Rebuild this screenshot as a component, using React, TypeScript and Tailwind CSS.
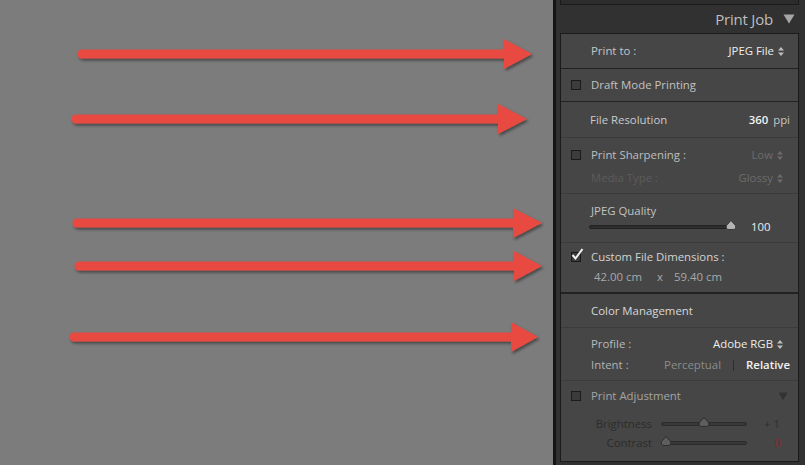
import React from "react";

const font = { fontFamily: '"Open Sans", "Noto Sans", sans-serif' };

const arrows = [
  { x1: 82, x2: 504, tip: 532, y: 54 },
  { x1: 76, x2: 498, tip: 527, y: 119 },
  { x1: 77, x2: 513, tip: 542, y: 223 },
  { x1: 79, x2: 514, tip: 542, y: 266 },
  { x1: 74, x2: 511, tip: 538, y: 337 },
];

const UpDown = ({ color = "#bdbdbd" }: { color?: string }) => (
  <svg width="6" height="9" viewBox="0 0 6 9" className="ml-[4px]">
    <path d="M3 0 L6 3.5 L0 3.5 Z" fill={color} />
    <path d="M0 5.5 L6 5.5 L3 9 Z" fill={color} />
  </svg>
);

const Check = ({ checked = false, dim = false }: { checked?: boolean; dim?: boolean }) => (
  <div className="relative w-[10px] h-[10px]">
    <div
      className={`w-[10px] h-[10px] border ${dim ? "border-[#1c1c1c] bg-[#3a3a3a]" : "border-[#1a1a1a] bg-[#3c3c3c]"}`}
    />
    {checked && (
      <svg width="13" height="13" viewBox="0 0 13 13" className="absolute left-[0px] top-[-4px]">
        <path d="M1.5 7 L4.5 10.5 L11.5 1" fill="none" stroke="#f2f2f2" strokeWidth="2" />
      </svg>
    )}
  </div>
);

const Thumb = ({ left, dim = false }: { left: number; dim?: boolean }) => (
  <svg
    width="12"
    height="10"
    viewBox="0 0 12 10"
    className="absolute top-[-5px]"
    style={{ left: left - 6 }}
  >
    <path
      d="M6 0.5 L10.5 5.5 Q11.5 9.5 8 9.5 L4 9.5 Q0.5 9.5 1.5 5.5 Z"
      fill={dim ? "#5e5e5e" : "#b4b4b4"}
      stroke={dim ? "#2e2e2e" : "#3a3a3a"}
      strokeWidth="1"
    />
  </svg>
);

const Slider = ({ width, pos, dim = false }: { width: number; pos: number; dim?: boolean }) => (
  <div className="relative h-[4px]" style={{ width }}>
    <div
      className={`h-[4px] rounded-full border ${dim ? "border-[#2c2c2c] bg-[#383838]" : "border-[#222] bg-[#2e2e2e]"}`}
    />
    <Thumb left={pos} dim={dim} />
  </div>
);

export default function App() {
  return (
    <div className="flex w-[805px] h-[465px] overflow-hidden" style={font}>
      <div className="w-[553px] h-full bg-[#7c7c7c]">
        <svg width="553" height="465" viewBox="0 0 553 465">
          <defs>
            <filter id="sh" x="-5%" y="-50%" width="110%" height="200%">
              <feDropShadow dx="1.5" dy="2" stdDeviation="1.5" floodColor="#000" floodOpacity="0.45" />
            </filter>
          </defs>
          {arrows.map((a, i) => (
            <g key={i} filter="url(#sh)">
              <line x1={a.x1} y1={a.y} x2={a.x2 + 2} y2={a.y} stroke="#e8493f" strokeWidth="9" strokeLinecap="round" />
              <polygon points={`${a.x2},${a.y - 15} ${a.tip},${a.y} ${a.x2},${a.y + 15}`} fill="#e8493f" />
            </g>
          ))}
        </svg>
      </div>

      <div className="w-[252px] h-full flex bg-[#313131]">
        <div className="w-[3px] h-full bg-[#151515]" />
        <div className="flex-1 flex flex-col pl-[4px] pr-[6px]">
          <div className="h-[5px] border-x border-b border-[#1b1b1b] bg-[#2c2c2c]" />
          <div className="h-[28px] flex items-center justify-end pr-[4px]">
            <span className="text-[15px] text-[#bdbdbd] tracking-[-0.2px]">Print Job</span>
            <svg width="12" height="10" viewBox="0 0 12 10" className="ml-[10px]">
              <path d="M0.5 0.5 L11.5 0.5 L6 9.5 Z" fill="#a6a6a6" />
            </svg>
          </div>

          <div className="flex-1 mb-[3px] border border-[#1b1b1b] bg-[#464646] text-[11.4px] leading-[16px]">
            {/* Print to */}
            <div className="h-[34px] flex items-center pl-[30px] pr-[14px]">
              <span className="text-[#c4c4c4]">Print to :</span>
              <span className="ml-auto text-[#ececec]">JPEG File</span>
              <UpDown />
            </div>

            {/* Draft mode */}
            <div className="h-[33px] border-t border-[#222] flex items-center pl-[10px]">
              <Check />
              <span className="ml-[10px] text-[#c2c2c2]">Draft Mode Printing</span>
            </div>

            {/* File resolution */}
            <div className="h-[36px] border-t border-[#222] flex items-center pl-[29px] pr-[8px]">
              <span className="text-[#cacaca]">File Resolution</span>
              <span className="ml-auto text-[#f2f2f2] font-semibold">360</span>
              <span className="ml-[5px] text-[#c4c4c4]">ppi</span>
            </div>

            {/* Sharpening */}
            <div className="h-[56px] border-t border-[#3b3b3b] pt-[9px] pl-[10px] pr-[15px]">
              <div className="h-[16px] flex items-center">
                <Check />
                <span className="ml-[10px] text-[#bebebe]">Print Sharpening :</span>
                <span className="ml-auto text-[#6c6c6c]">Low</span>
                <UpDown color="#6c6c6c" />
              </div>
              <div className="h-[16px] mt-[7px] flex items-center pl-[20px]">
                <span className="text-[#5c5c5c]">Media Type :</span>
                <span className="ml-auto text-[#6c6c6c]">Glossy</span>
                <UpDown color="#6c6c6c" />
              </div>
            </div>

            {/* JPEG quality */}
            <div className="h-[49px] border-t border-[#3b3b3b] pt-[9px] pl-[30px]">
              <div className="h-[16px] text-[#c2c2c2]">JPEG Quality</div>
              <div className="h-[16px] flex items-center">
                <div className="ml-[-2px]">
                  <Slider width={145} pos={142} />
                </div>
                <span className="ml-[17px] text-[#ececec]">100</span>
              </div>
            </div>

            {/* Custom dims */}
            <div className="h-[50px] border-t border-[#3b3b3b] pt-[6px] pl-[10px]">
              <div className="h-[16px] flex items-center">
                <Check checked />
                <span className="ml-[10px] text-[#d2d2d2]">Custom File Dimensions :</span>
              </div>
              <div className="h-[16px] mt-[4px] flex items-center pl-[23px] text-[#a8a8a8]">
                <span>42.00 cm</span>
                <span className="ml-[15px]">x</span>
                <span className="ml-[11px]">59.40 cm</span>
              </div>
            </div>

            {/* Color management */}
            <div className="h-[35px] border-t-2 border-[#222] flex items-center pl-[30px]">
              <span className="text-[#d8d8d8]">Color Management</span>
            </div>

            {/* Profile / Intent */}
            <div className="h-[53px] border-t border-[#3b3b3b] pt-[8px] pl-[30px] pr-[8px]">
              <div className="h-[16px] flex items-center pr-[7px]">
                <span className="text-[#bababa]">Profile :</span>
                <span className="ml-auto text-[#ececec]">Adobe RGB</span>
                <UpDown />
              </div>
              <div className="h-[16px] mt-[5px] flex items-center">
                <span className="text-[#b2b2b2]">Intent :</span>
                <span className="ml-auto text-[#8c8c8c]">Perceptual</span>
                <span className="ml-[12px] w-[1px] h-[11px] bg-[#2e2e2e]" />
                <span className="ml-[12px] text-[#f2f2f2] font-semibold">Relative</span>
              </div>
            </div>

            {/* Print adjustment */}
            <div className="h-[79px] border-t border-[#3b3b3b] pt-[7px] pl-[10px] pr-[8px]">
              <div className="h-[16px] flex items-center">
                <Check dim />
                <span className="ml-[10px] text-[#a4a4a4]">Print Adjustment</span>
                <svg width="10" height="9" viewBox="0 0 10 9" className="ml-auto mr-[2px]">
                  <path d="M0.5 0.5 L9.5 0.5 L5 8.5 Z" fill="#333" />
                </svg>
              </div>
              <div className="h-[16px] mt-[12px] flex items-center">
                <span className="w-[81px] text-right text-[#2c2c2c]">Brightness</span>
                <div className="ml-[9px]">
                  <Slider width={86} pos={43} dim />
                </div>
                <span className="ml-auto mr-[10px] text-[#2e2e2e]">+ 1</span>
              </div>
              <div className="h-[16px] mt-[3px] flex items-center">
                <span className="w-[81px] text-right text-[#2c2c2c]">Contrast</span>
                <div className="ml-[9px]">
                  <Slider width={86} pos={5} dim />
                </div>
                <span className="ml-auto mr-[9px] text-[#8a2626]">0</span>
              </div>
            </div>
          </div>
        </div>
      </div>
    </div>
  );
}
